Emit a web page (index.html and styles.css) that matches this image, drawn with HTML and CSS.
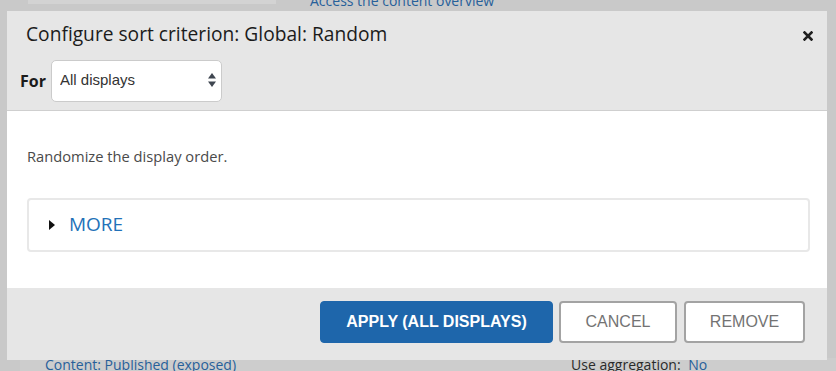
FILE: index.html
```html
<!DOCTYPE html>
<html lang="en">
<head>
  <meta charset="UTF-8">
  <meta name="viewport" content="width=device-width, initial-scale=1.0">
  <link rel="stylesheet" href="styles.css">
  <title>Configure sort criterion</title>
</head>
<body>

  <div class="page">
    <div class="pageTop">
      <div class="pageTab"></div>
      <a class="pageLink topLink">Access the content overview</a>
    </div>
    <div class="pageBottom">
      <a class="pageLink bottomLink">Content: Published (exposed)</a>
      <span class="aggregation">Use aggregation: <a class="pageLink">No</a></span>
    </div>
  </div>

  <div class="dialog">
    <div class="dialogHeader">
      <div class="titleRow">
        <h1 class="dialogTitle">Configure sort criterion: Global: Random</h1>
        <a class="closeBtn" title="Close">
          <svg width="10" height="10" viewBox="0 0 10 10">
            <path d="M1.5 1.5 L8.5 8.5 M8.5 1.5 L1.5 8.5" stroke="#1f1f1f" stroke-width="2.6" stroke-linecap="square"/>
          </svg>
        </a>
      </div>
      <div class="forRow">
        <label class="forLabel">For</label>
        <div class="selectWrap">
          <select class="displaySelect">
            <option>All displays</option>
            <option>This page (override)</option>
          </select>
          <svg class="selectArrows" width="8" height="14" viewBox="0 0 8 14">
            <path d="M4 0 L8 5.5 L0 5.5 Z" fill="#3f4650"/>
            <path d="M0 8.5 L8 8.5 L4 14 Z" fill="#3f4650"/>
          </svg>
        </div>
      </div>
    </div>

    <div class="dialogBody">
      <p class="description">Randomize the display order.</p>
      <div class="details">
        <span class="caret"></span>
        <a class="moreLink">MORE</a>
      </div>
    </div>

    <div class="dialogFooter">
      <button class="btn btnPrimary">APPLY (ALL DISPLAYS)</button>
      <button class="btn btnCancel">CANCEL</button>
      <button class="btn btnRemove">REMOVE</button>
    </div>
  </div>

</body>
</html>
```

FILE: styles.css
```css
html, body {
  margin: 0;
  padding: 0;
}

body {
  background-color: #c9c9c9;
  font-family: "Open Sans", "Noto Sans", sans-serif;
  width: 836px;
  height: 371px;
  overflow: hidden;
  position: relative;
}

/* page behind the modal */
.page {
  height: 371px;
  display: flex;
  flex-direction: column;
  justify-content: space-between;
}

.pageTop {
  display: flex;
  height: 11px;
  overflow: hidden;
}

.pageTab {
  width: 248px;
  height: 4px;
  margin-left: 28px;
  background-color: #d3d3d3;
}

.pageLink {
  color: #27609a;
  font-size: 14px;
  line-height: 20px;
  text-decoration: none;
}

.topLink {
  margin-left: 34px;
  margin-top: -9px;
}

.pageBottom {
  display: flex;
  height: 13px;
  overflow: hidden;
  background-color: #cdcdcd;
  margin-left: 20px;
}

.bottomLink {
  margin-left: 25px;
  margin-top: -3px;
}

.aggregation {
  margin-left: 335px;
  margin-top: -3px;
  font-size: 14px;
  line-height: 20px;
  color: #2a2a2a;
}

.aggregation .pageLink {
  margin-left: 4px;
}

/* modal */
.dialog {
  position: absolute;
  left: 7px;
  top: 11px;
  width: 820px;
  height: 349px;
  display: flex;
  flex-direction: column;
  background-color: #fff;
}

.dialogHeader {
  background-color: #e6e6e6;
  border-bottom: 1px solid #cfcfcf;
  padding: 11px 0 8px 13px;
}

.titleRow {
  display: flex;
  align-items: center;
  justify-content: space-between;
  padding-left: 6px;
  padding-right: 14px;
}

.dialogTitle {
  margin: 0;
  font-size: 19.2px;
  line-height: 24px;
  font-weight: normal;
  color: #1b1b1b;
}

.closeBtn {
  display: flex;
  cursor: pointer;
  margin-top: 4px;
}

.forRow {
  display: flex;
  align-items: center;
  gap: 5px;
  margin-top: 14px;
}

.forLabel {
  font-weight: bold;
  font-size: 16px;
  color: #1b1b1b;
}

.selectWrap {
  position: relative;
  width: 171px;
  height: 42px;
}

.displaySelect {
  appearance: none;
  -webkit-appearance: none;
  width: 100%;
  height: 100%;
  box-sizing: border-box;
  border: 1px solid #cbcbcb;
  border-radius: 5px;
  background-color: #fff;
  padding: 0 0 3px 8px;
  font-family: "Liberation Sans", Arial, sans-serif;
  font-size: 15px;
  color: #333;
  outline: none;
}

.selectArrows {
  position: absolute;
  right: 6px;
  top: 13px;
  pointer-events: none;
}

.dialogBody {
  flex: 1;
  padding: 35px 17px 0 20px;
}

.description {
  margin: 0 0 32px 0;
  font-size: 14.7px;
  line-height: 20px;
  color: #4a4a4a;
}

.details {
  display: flex;
  align-items: center;
  border: 2px solid #e8e8e8;
  border-radius: 4px;
  padding: 11px 0 13px 20px;
}

.caret {
  width: 0;
  height: 0;
  border-top: 5px solid transparent;
  border-bottom: 5px solid transparent;
  border-left: 6px solid #111;
  margin-right: 14px;
  margin-top: 1px;
}

.moreLink {
  color: #2271b8;
  font-size: 19px;
  line-height: 26px;
  cursor: pointer;
}

.dialogFooter {
  height: 72px;
  box-sizing: border-box;
  background-color: #e6e6e6;
  display: flex;
  justify-content: flex-end;
  align-items: flex-start;
  gap: 6px;
  padding: 13px 22px 0 0;
}

.btn {
  height: 42px;
  box-sizing: border-box;
  border: 2px solid #a3a3a3;
  border-radius: 4px;
  background-color: #fff;
  color: #737373;
  font-family: "Liberation Sans", Arial, sans-serif;
  font-size: 16px;
  padding: 0;
  cursor: pointer;
}

.btnPrimary {
  width: 233px;
  background-color: #1e66ab;
  border: 1px solid #1e66ab;
  color: #fff;
  font-weight: bold;
}

.btnCancel {
  width: 118px;
}

.btnRemove {
  width: 121px;
  margin-left: 1px;
}
```
